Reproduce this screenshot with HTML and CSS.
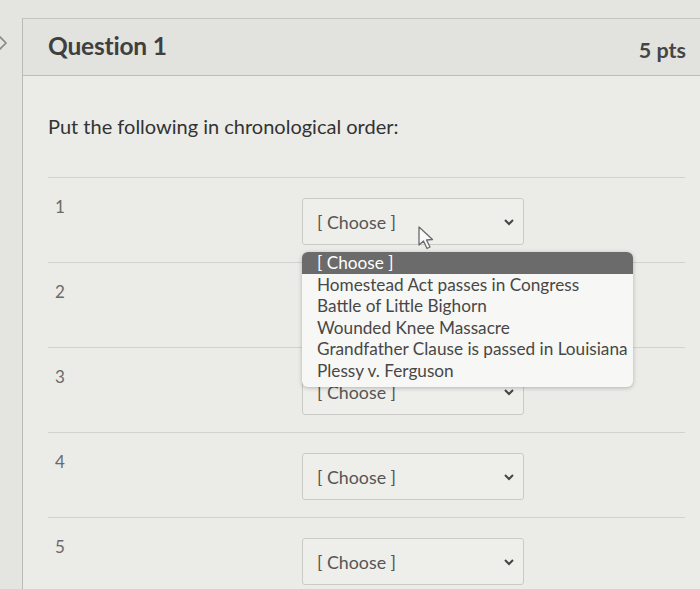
FILE: index.html
```html
<!DOCTYPE html>
<html>
<head>
<meta charset="utf-8">
<link rel="stylesheet" href="styles.css">
</head>
<body>
<div class="page">
  <div class="gutter">
    <svg class="expand" width="12" height="18" viewBox="0 0 12 18"><polyline points="1,2 8,9 1,16" fill="none" stroke="#8a8a88" stroke-width="1.6"/></svg>
  </div>
  <div class="card">
    <div class="header">
      <h2 class="title">Question 1</h2>
      <span class="pts">5 pts</span>
    </div>
    <div class="body">
      <p class="prompt">Put the following in chronological order:</p>
      <div class="rows">
        <div class="row"><span class="num">1</span><div class="select"><span>[ Choose ]</span><svg class="chev" width="12" height="8" viewBox="0 0 12 8"><polyline points="2,2 6,6 10,2" fill="none" stroke="#444" stroke-width="2"/></svg></div></div>
        <div class="row"><span class="num">2</span><div class="select"><span>[ Choose ]</span><svg class="chev" width="12" height="8" viewBox="0 0 12 8"><polyline points="2,2 6,6 10,2" fill="none" stroke="#444" stroke-width="2"/></svg></div></div>
        <div class="row"><span class="num">3</span><div class="select"><span>[ Choose ]</span><svg class="chev" width="12" height="8" viewBox="0 0 12 8"><polyline points="2,2 6,6 10,2" fill="none" stroke="#444" stroke-width="2"/></svg></div></div>
        <div class="row"><span class="num">4</span><div class="select"><span>[ Choose ]</span><svg class="chev" width="12" height="8" viewBox="0 0 12 8"><polyline points="2,2 6,6 10,2" fill="none" stroke="#444" stroke-width="2"/></svg></div></div>
        <div class="row"><span class="num">5</span><div class="select"><span>[ Choose ]</span><svg class="chev" width="12" height="8" viewBox="0 0 12 8"><polyline points="2,2 6,6 10,2" fill="none" stroke="#444" stroke-width="2"/></svg></div></div>
      </div>
    </div>
  </div>
</div>
<ul class="menu">
  <li class="active">[ Choose ]</li>
  <li>Homestead Act passes in Congress</li>
  <li>Battle of Little Bighorn</li>
  <li>Wounded Knee Massacre</li>
  <li>Grandfather Clause is passed in Louisiana</li>
  <li>Plessy v. Ferguson</li>
</ul>
<svg class="cursor" width="20" height="26" viewBox="0 0 20 26"><path d="M2,2 L2,20 L6.5,16 L10,23.5 L13,22 L9.5,15 L15.5,14.5 Z" fill="#fafafa" stroke="#6a6a6a" stroke-width="1.3" stroke-linejoin="round"/></svg>
</body>
</html>
```
FILE: styles.css
```css
html, body {
  margin: 0;
  padding: 0;
}
body {
  width: 700px;
  height: 589px;
  overflow: hidden;
  background: #e4e4e1;
  font-family: Lato, "Open Sans", sans-serif;
  position: relative;
}
.page {
  display: flex;
  padding-top: 18px;
}
.gutter {
  width: 22px;
  flex: none;
}
.expand {
  display: block;
  margin-top: 16px;
  margin-left: -2px;
}
.card {
  flex: 1;
  border-left: 1px solid #b9b9b6;
  border-top: 1px solid #c4c4c0;
  background: #ebebe8;
  height: 570px;
  overflow: hidden;
}
.header {
  height: 56px;
  background: #e2e2de;
  border-bottom: 1px solid #bcbcb8;
  display: flex;
  align-items: center;
  justify-content: space-between;
  padding: 0 14px 0 25px;
}
.title {
  margin: 0;
  font-size: 24.5px;
  font-weight: 700;
  color: #3f3f3f;
  letter-spacing: -0.2px;
  margin-top: -3px;
}
.pts {
  font-size: 21.5px;
  font-weight: 700;
  color: #454545;
  margin-top: 6px;
}
.body {
  padding: 0 15px 0 25px;
}
.prompt {
  margin: 0;
  padding-top: 38px;
  height: 63px;
  font-size: 20px;
  color: #333;
}
.rows {
  display: flex;
  flex-direction: column;
}
.row {
  height: 84px;
  border-top: 1px solid #d2d2ce;
  display: flex;
  align-items: flex-start;
}
.num {
  width: 254px;
  flex: none;
  padding-left: 7px;
  box-sizing: border-box;
  margin-top: 18px;
  font-size: 17px;
  color: #6a6a6a;
}
.select {
  margin-top: 20px;
  width: 222px;
  height: 47px;
  box-sizing: border-box;
  border: 1px solid #cacac6;
  border-radius: 3px;
  background: #eeeeeb;
  display: flex;
  align-items: center;
  justify-content: space-between;
  padding: 0 8px 0 14px;
  font-size: 17.8px;
  color: #555;
}
.chev {
  display: block;
}
.menu {
  position: absolute;
  left: 302px;
  top: 252px;
  width: 331px;
  height: 135px;
  margin: 0;
  padding: 0;
  list-style: none;
  background: #f7f7f5;
  border-radius: 6px;
  box-shadow: 0 1px 4px rgba(0,0,0,0.25);
  overflow: hidden;
  font-size: 17.2px;
  color: #474747;
}
.menu li {
  height: 21.6px;
  line-height: 21.6px;
  padding-left: 15px;
  white-space: nowrap;
}
.menu li.active {
  background: #6b6b6b;
  color: #fff;
}
.cursor {
  position: absolute;
  left: 417px;
  top: 225px;
}
```
